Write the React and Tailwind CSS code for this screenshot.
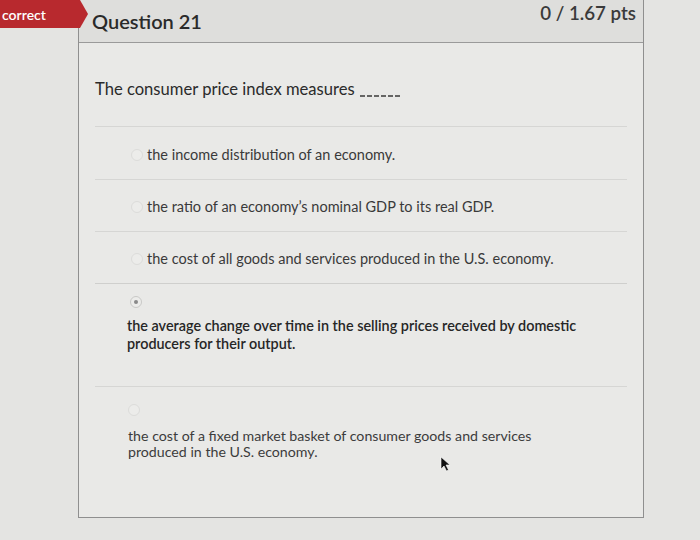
import React from "react";

function Radio({ checked, faint }) {
  return (
    <span
      className={`inline-flex h-[12px] w-[12px] shrink-0 items-center justify-center rounded-full border ${
        faint ? "border-[#dcdcda]" : "border-[#c9c9c7]"
      } bg-[#ececea]`}
    >
      {checked && <span className="h-[4px] w-[4px] rounded-full bg-[#8a8a8a]" />}
    </span>
  );
}

export default function App() {
  return (
    <div
      className="relative flex h-[540px] w-[700px] overflow-hidden bg-[#e4e4e2] text-[#2f2f2f]"
      style={{ fontFamily: "Lato, 'Open Sans', sans-serif" }}
    >
      {/* left strip */}
      <div className="relative w-[78px] shrink-0">
        <div className="relative z-10 flex h-[28px] w-[80px] items-center bg-[#b8292e] pl-[2px] text-[14px] font-semibold text-white">
          correct
          <span className="absolute right-[-8px] top-0 h-0 w-0 border-y-[14px] border-l-[8px] border-y-transparent border-l-[#b8292e]" />
        </div>
      </div>

      {/* card */}
      <div className="mb-[22px] flex w-[566px] flex-col border border-t-0 border-[#8f8f8f] bg-[#e9e9e7]">
        <div className="flex h-[43px] items-center justify-between border-b border-[#9a9a9a] bg-[#dededc] pl-[13px] pr-[7px]">
          <span className="text-[20px] font-semibold text-[#2a2a2a]">Question 21</span>
          <span className="-mt-[16px] text-[18.7px] font-semibold text-[#3a3a3a]">0 / 1.67 pts</span>
        </div>

        <div className="flex flex-col px-[16px]">
          <div className="flex h-[83px] items-center pt-[9px] pl-[-2px] text-[16.6px] text-[#2b2b2b]">
            The consumer price index measures
            <svg className="ml-[5px] mt-[14px]" width="42" height="2" viewBox="0 0 42 2">
              <line x1="0" y1="1" x2="42" y2="1" stroke="#3a3a3a" strokeWidth="1.4" strokeDasharray="5 2" />
            </svg>
          </div>

          <div className="flex h-[53px] items-center gap-[4px] border-t border-[#d6d6d4] pl-[36px] pt-[4px] text-[14.5px] text-[#3a3a3a]">
            <Radio faint />
            <span>the income distribution of an economy.</span>
          </div>
          <div className="flex h-[52px] items-center gap-[4px] border-t border-[#d6d6d4] pl-[36px] pt-[2px] text-[14.5px] text-[#3a3a3a]">
            <Radio faint />
            <span>the ratio of an economy’s nominal GDP to its real GDP.</span>
          </div>
          <div className="flex h-[52px] items-center gap-[4px] border-t border-[#d6d6d4] pl-[36px] pt-[2px] text-[14.5px] text-[#3a3a3a]">
            <Radio faint />
            <span>the cost of all goods and services produced in the U.S. economy.</span>
          </div>

          <div className="flex h-[103px] flex-col border-t border-[#cfcfcd] pl-[32px] pt-[12px]">
            <div className="flex pl-[3px]">
              <Radio checked />
            </div>
            <p className="mt-[9px] w-[480px] text-[14.4px] font-semibold leading-[18px] text-[#262626]">
              the average change over time in the selling prices received by domestic producers for their output.
            </p>
          </div>

          <div className="flex flex-col border-t border-[#d6d6d4] pl-[33px] pt-[17px]">
            <div className="flex">
              <Radio faint />
            </div>
            <p className="mt-[12px] w-[430px] text-[14.2px] leading-[16px] text-[#3c3c3c]">
              the cost of a fixed market basket of consumer goods and services produced in the U.S. economy.
            </p>
          </div>
        </div>
      </div>

      {/* mouse cursor */}
      <svg className="absolute left-[440px] top-[456px]" width="12" height="16" viewBox="0 0 12 16">
        <path d="M1 1 L1 13 L4 10 L6.5 15 L8.5 14 L6 9 L10 9 Z" fill="#111" stroke="#fff" strokeWidth="0.6" />
      </svg>
    </div>
  );
}
